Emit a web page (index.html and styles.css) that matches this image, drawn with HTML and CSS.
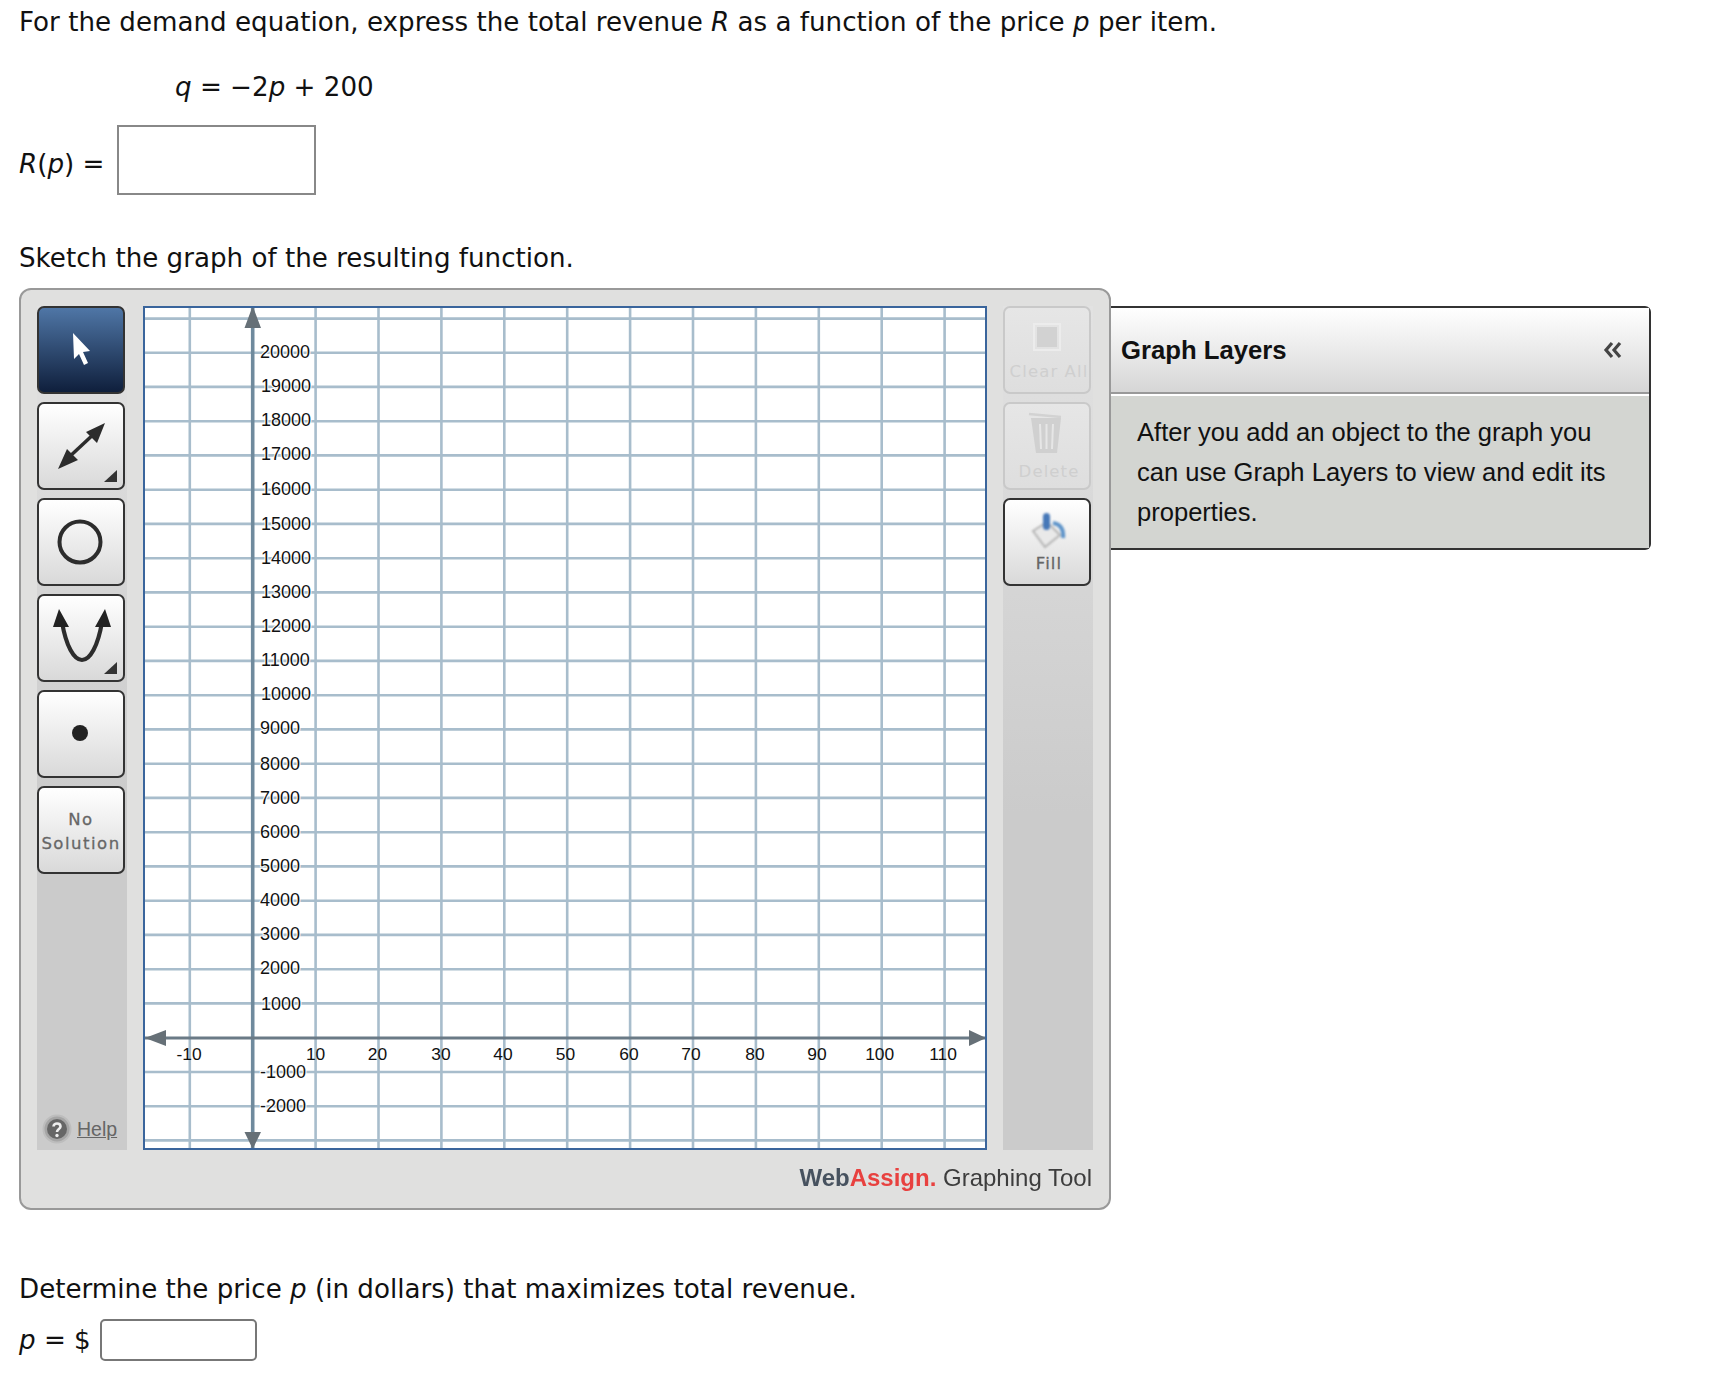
FILE: index.html
```html
<!DOCTYPE html>
<html lang="en">
<head>
<meta charset="utf-8">
<title>Graphing question</title>
<link rel="stylesheet" href="styles.css">
</head>
<body>
<main class="page">
  <p class="line intro">For the demand equation, express the total revenue <i>R</i> as a function of the price <i>p</i> per item.</p>
  <p class="line equation"><i>q</i> = &minus;2<i>p</i> + 200</p>
  <div class="answer-row">
    <span class="answer-label"><i>R</i>(<i>p</i>) =</span>
    <input class="box-input" type="text" aria-label="R(p)">
  </div>
  <p class="line sketch">Sketch the graph of the resulting function.</p>

  <div class="graph-row">
    <section class="tool-panel">
      <div class="tool-body">
        <div class="tool-col">
          <button class="btn btn-active" type="button">
            <svg class="btn-icon" viewBox="0 0 88 88"><path d="M36 27 L53 45 L46 46 L51 57 L47 59 L42 48 L37 53 Z" fill="#fff"/></svg>
          </button>
          <button class="btn" type="button">
            <svg class="btn-icon" viewBox="0 0 88 88">
              <path d="M30 57 L59 30" stroke="#2c2c2c" stroke-width="3.5" fill="none"/>
              <path d="M68 21 L60 41 L49 30 Z M21 67 L30 47 L41 58 Z" fill="#2c2c2c"/>
              <path d="M80 68 L80 80 L67 80 Z" fill="#333"/>
            </svg>
          </button>
          <button class="btn" type="button">
            <svg class="btn-icon" viewBox="0 0 88 88"><circle cx="43" cy="44" r="20.5" fill="none" stroke="#2c2c2c" stroke-width="4"/></svg>
          </button>
          <button class="btn" type="button">
            <svg class="btn-icon" viewBox="0 0 88 88">
              <path d="M25 28 C29 52 37 66 45 66 C53 66 61 52 65 28" fill="none" stroke="#2c2c2c" stroke-width="4.2"/>
              <path d="M22 15 L16 33 L32 33 Z M68 15 L58 33 L74 33 Z" fill="#222"/>
              <path d="M80 68 L80 80 L67 80 Z" fill="#333"/>
            </svg>
          </button>
          <button class="btn" type="button">
            <svg class="btn-icon" viewBox="0 0 88 88"><circle cx="43" cy="43" r="8" fill="#222"/></svg>
          </button>
          <button class="btn btn-text" type="button"><span>No</span><span>Solution</span></button>
          <a class="help" href="#">
            <svg class="help-icon" viewBox="0 0 30 30">
              <circle cx="15" cy="15" r="13.5" fill="#a5a5a5" stroke="#bdbdbd" stroke-width="2"/>
              <circle cx="15" cy="15" r="10" fill="#666"/>
              <path d="M11.5 12.5 C11.5 8.5 18.5 8.5 18.5 12.5 C18.5 15 15 15 15 18" fill="none" stroke="#eee" stroke-width="2.6"/>
              <circle cx="15" cy="21.5" r="1.7" fill="#eee"/>
            </svg>
            <span>Help</span>
          </a>
        </div>

        <div class="graph">
          <svg class="graph-svg" viewBox="145 308 840 840">
            <g class="gridlines">
              <path d="M145 318.6H985M145 352.7H985M145 386.9H985M145 421.2H985M145 455.4H985M145 489.7H985M145 523.9H985M145 558.2H985M145 592.4H985M145 626.7H985M145 660.9H985M145 695.2H985M145 729.4H985M145 763.7H985M145 797.9H985M145 832.2H985M145 866.4H985M145 900.7H985M145 934.9H985M145 969.2H985M145 1003.4H985M145 1072H985M145 1106.2H985M145 1140.4H985"/>
              <path d="M189.8 308V1148M315.6 308V1148M378.5 308V1148M441.4 308V1148M504.3 308V1148M567.2 308V1148M630.1 308V1148M693 308V1148M755.9 308V1148M818.8 308V1148M881.7 308V1148M944.6 308V1148"/>
            </g>
            <g class="axes">
              <path class="axis-y" d="M252.7 308V1148"/>
              <path class="axis-x" d="M145 1038H985"/>
              <path class="axis-head" d="M252.7 306L261 328H244.5Z M252.7 1149L261 1132H244.5Z M145 1038L166 1030V1046Z M986 1038L969 1030V1046Z"/>
            </g>
            <g class="y-labels">
              <text x="260" y="358.3">20000</text><text x="261" y="392.3">19000</text><text x="261" y="425.8">18000</text><text x="261" y="459.8">17000</text><text x="261" y="495.3">16000</text><text x="261" y="529.8">15000</text><text x="261" y="563.8">14000</text><text x="261" y="598.3">13000</text><text x="261" y="632.3">12000</text><text x="261" y="666.3">11000</text><text x="261" y="700.3">10000</text>
              <text x="260" y="733.8">9000</text><text x="260" y="769.8">8000</text><text x="260" y="803.8">7000</text><text x="260" y="838">6000</text><text x="260" y="872">5000</text><text x="260" y="906">4000</text><text x="260" y="940">3000</text><text x="260" y="974">2000</text><text x="261" y="1010">1000</text>
              <text x="260" y="1078">-1000</text><text x="260" y="1112">-2000</text>
            </g>
            <g class="x-labels">
              <text x="189" y="1060">-10</text><text x="315.6" y="1060">10</text><text x="377.5" y="1060">20</text><text x="441" y="1060">30</text><text x="503" y="1060">40</text><text x="565.5" y="1060">50</text><text x="629" y="1060">60</text><text x="691" y="1060">70</text><text x="755" y="1060">80</text><text x="817" y="1060">90</text><text x="879.7" y="1060">100</text><text x="943" y="1060">110</text>
            </g>
          </svg>
        </div>

        <div class="tool-col">
          <button class="btn btn-disabled btn-labelled" type="button">
            <svg class="btn-icon" viewBox="0 0 88 88">
              <rect x="31" y="18" width="26" height="26" fill="none" stroke="#ececec" stroke-width="2"/>
              <rect x="34" y="21" width="20" height="20" fill="#d2d2d2"/>
            </svg>
            <span class="clear-label">Clear All</span>
          </button>
          <button class="btn btn-disabled btn-labelled" type="button">
            <svg class="btn-icon" viewBox="0 0 88 88">
              <path d="M26 12 L58 15" stroke="#d2d2d2" stroke-width="2.5"/>
              <path d="M28 16 H58 L54 51 H33 Z" fill="#d0d0d0"/>
              <path d="M37 22 L38 47 M43.5 22 V47 M50 22 L49 47" stroke="#e6e6e6" stroke-width="2"/>
            </svg>
            <span class="delete-label">Delete</span>
          </button>
          <button class="btn btn-labelled" type="button">
            <svg class="btn-icon fill-icon" viewBox="0 0 88 88">
              <path d="M30 33 L44 24 L57 37 L42 49 Z" fill="#e9e9e9" stroke="#b4b4b4" stroke-width="2"/>
              <path d="M50 25 C57 26 61 31 60 40" fill="none" stroke="#5d93c9" stroke-width="4"/>
              <rect x="40" y="15" width="7" height="17" rx="3.5" fill="#4678b8"/>
            </svg>
            <span class="fill-label">Fill</span>
          </button>
        </div>
      </div>
      <div class="brand"><span class="brand-web">Web</span><span class="brand-assign">Assign.</span> <span class="brand-tool">Graphing Tool</span></div>
    </section>

    <aside class="layers">
      <header class="layers-head">
        <h2>Graph Layers</h2>
        <svg class="collapse" viewBox="0 0 20 18"><path d="M9 2 L3 9 L9 16 M17 2 L11 9 L17 16" fill="none" stroke="#444" stroke-width="3.2"/></svg>
      </header>
      <p class="layers-body">After you add an object to the graph you can use Graph Layers to view and edit its properties.</p>
    </aside>
  </div>

  <p class="line determine">Determine the price <i>p</i> (in dollars) that maximizes total revenue.</p>
  <div class="price-row">
    <span class="price-label"><i>p</i> = $</span>
    <input class="price-input" type="text" aria-label="price">
  </div>
</main>
</body>
</html>
```
FILE: styles.css
```css
* { box-sizing: border-box; }
html, body { margin: 0; padding: 0; background: #fff; }
body { font-family: "DejaVu Sans", Verdana, sans-serif; font-size: 26.15px; color: #111; }
.page { padding-left: 19px; }
.line { margin: 0; line-height: 46px; height: 44px; white-space: nowrap; }
.intro { line-height: 44px; }
.equation { margin-top: 21px; padding-left: 156px; line-height: 44px; }
.answer-row { display: flex; align-items: center; margin-top: 16px; height: 70px; padding-top: 7px; }
.answer-label { width: 98px; }
.box-input { width: 199px; height: 70px; margin-top: -7px; border: 2px solid #888; background: #fff; padding: 0; }
.sketch { margin-top: 40px; line-height: 47px; }
.graph-row { display: flex; align-items: flex-start; margin-top: 9px; }

.tool-panel { width: 1092px; height: 922px; border: 2px solid #999; border-radius: 12px; background: #e0e0df; padding: 16px; flex: none; }
.tool-body { display: flex; gap: 16px; height: 844px; }
.tool-col { width: 90px; height: 844px; display: flex; flex-direction: column; gap: 8px; background: linear-gradient(#e2e2e2, #cbcbcb 60%, #cbcbcb); }

.btn { position: relative; width: 88px; height: 88px; padding: 0; border: 2px solid #333; border-radius: 7px; background: linear-gradient(#ffffff, #d9d9d9); display: block; flex: none; font-family: "DejaVu Sans", sans-serif; }
.btn-icon { position: absolute; left: -2px; top: -2px; width: 88px; height: 88px; filter: blur(.4px); }
.fill-icon { filter: blur(.8px); }
.btn-active { background: linear-gradient(#4f76a6, #0f1f3c); }
.btn-text { display: flex; flex-direction: column; align-items: center; justify-content: center; font-size: 16.5px; line-height: 24px; color: #666; letter-spacing: 1.5px; font-weight: 400; padding-top: 4px; -webkit-text-stroke: .3px #666; }
.btn-labelled span { position: absolute; left: 2px; right: -2px; text-align: center; font-size: 16.5px; letter-spacing: 1.1px; line-height: 20px; }
.clear-label { top: 54px; white-space: nowrap; color: #cfcfcf; }
.delete-label { top: 58px; color: #cfcfcf; }
.fill-label { top: 54px; color: #666; letter-spacing: 1.4px; -webkit-text-stroke: .3px #666; }
.btn-disabled { border-color: #c9c9c9; background: linear-gradient(#e6e6e6, #dedede); }

.help { margin-top: auto; height: 42px; margin-bottom: 0; display: flex; align-items: center; gap: 5px; padding-left: 5px; color: #666; font-family: "Liberation Sans", Arial, sans-serif; font-size: 19.5px; text-decoration: underline; }
.help-icon { width: 30px; height: 30px; flex: none; filter: blur(.5px); }

.graph { width: 844px; height: 844px; border: 2px solid #3a659c; background: #fff; flex: none; }
.graph-svg { display: block; width: 840px; height: 840px; }
.gridlines { fill: none; stroke: #a8bdcc; stroke-width: 2.6; filter: blur(.7px); }
.axes { filter: blur(.5px); fill: none; }
.axis-y { stroke: #6f8a9d; stroke-width: 3.6; }
.axis-x { stroke: #6a7a86; stroke-width: 3; }
.axis-head { fill: #667077; }
.y-labels text, .x-labels text { font-family: "Liberation Sans", Arial, sans-serif; font-size: 18px; fill: #111; }
.y-labels text { stroke: #fff; stroke-width: 2px; paint-order: stroke; }
.x-labels text { text-anchor: middle; font-size: 17.4px; }

.brand { margin-top: 14px; text-align: right; padding-right: 1px; font-family: "Liberation Sans", Arial, sans-serif; font-size: 24px; line-height: 28px; white-space: nowrap; filter: blur(.3px); }
.brand-web { font-weight: 700; color: #47525f; }
.brand-assign { font-weight: 700; color: #e8413f; }
.brand-tool { color: #3d3d3d; }

.layers { width: 540px; margin-top: 18px; flex: none; border: 2px solid #333; border-left: 0; border-radius: 0 6px 6px 0; font-family: "Liberation Sans", Arial, sans-serif; }
.layers-head { height: 86px; display: flex; align-items: center; justify-content: space-between; padding: 0 26px 0 10px; background: linear-gradient(#ffffff, #d6d6d6); border-bottom: 2px solid #999; }
.layers-head h2 { margin: 0; font-size: 25.7px; font-weight: 700; color: #111; }
.collapse { width: 20px; height: 18px; display: block; }
.layers-body { margin: 0; border-top: 2px solid #fff; background: #d3d5d1; padding: 16px 26px 11px 26px; font-size: 25.55px; line-height: 40px; color: #111; height: 154px; }

.determine { margin-top: 56px; }
.price-row { display: flex; align-items: center; margin-top: 9px; height: 42px; }
.price-label { width: 81px; padding-bottom: 1px; }
.price-input { width: 157px; height: 42px; border: 2px solid #777; border-radius: 5px; background: #fff; padding: 0; }
```
